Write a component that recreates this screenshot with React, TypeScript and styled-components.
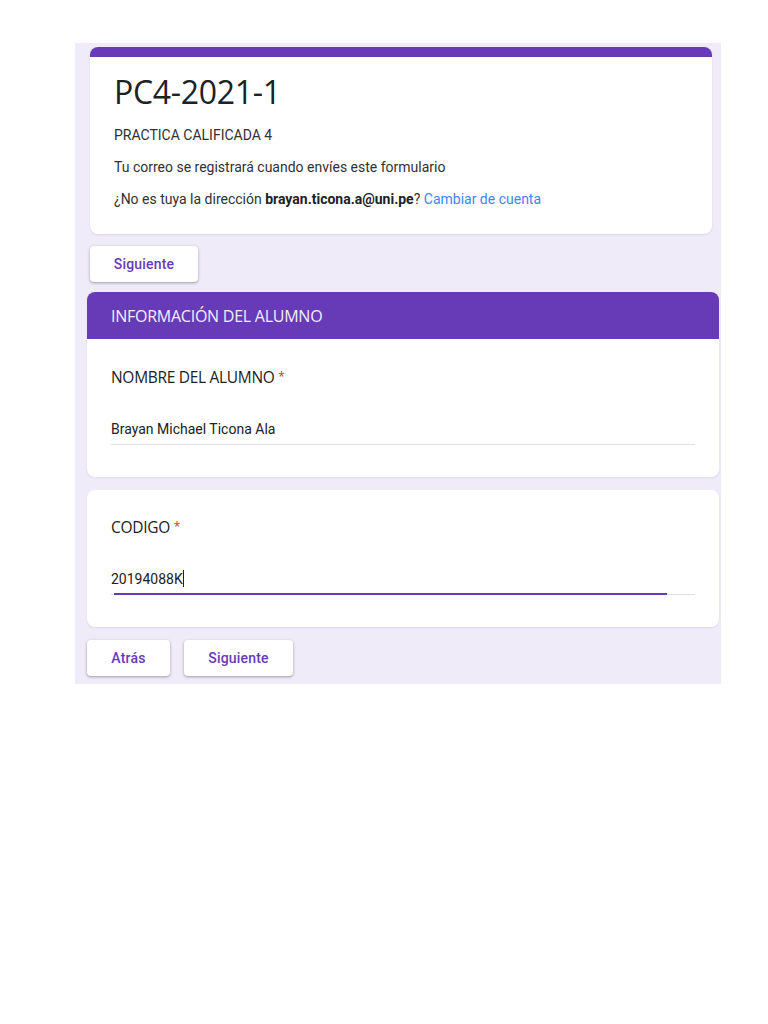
import styled, { createGlobalStyle } from 'styled-components';

const GlobalStyle = createGlobalStyle`
    body {
        margin: 0;
        background: #ffffff;
        font-family: Roboto, "Liberation Sans", sans-serif;
        color: #202124;
    }
`

const fields = [
    { label: 'NOMBRE DEL ALUMNO', value: 'Brayan Michael Ticona Ala', focused: false },
    { label: 'CODIGO', value: '20194088K', focused: true },
]

export default function App() {
    return (
        <>
            <GlobalStyle />
            <Page>
                <FormArea>
                    <HeaderCard>
                        <Title>PC4-2021-1</Title>
                        <Description>PRACTICA CALIFICADA 4</Description>
                        <Notice>Tu correo se registrará cuando envíes este formulario</Notice>
                        <Notice>
                            ¿No es tuya la dirección <b>brayan.ticona.a@uni.pe</b>? <Link>Cambiar de cuenta</Link>
                        </Notice>
                    </HeaderCard>
                    <ButtonRow $inset={3}>
                        <NavButton $width={108}>Siguiente</NavButton>
                    </ButtonRow>
                    <Section>
                        <SectionHeader>INFORMACIÓN DEL ALUMNO</SectionHeader>
                        <QuestionBody $top={true}>
                            <Question>{fields[0].label} <Required>*</Required></Question>
                            <Answer>
                                <AnswerText>{fields[0].value}</AnswerText>
                            </Answer>
                        </QuestionBody>
                    </Section>
                    <QuestionCard>
                        <QuestionBody>
                            <Question>{fields[1].label} <Required>*</Required></Question>
                            <Answer>
                                <AnswerText>{fields[1].value}<Caret /></AnswerText>
                                <FocusLine />
                            </Answer>
                        </QuestionBody>
                    </QuestionCard>
                    <ButtonRow $inset={0}>
                        <NavButton $width={83}>Atrás</NavButton>
                        <NavButton $width={109}>Siguiente</NavButton>
                    </ButtonRow>
                </FormArea>
            </Page>
        </>
    )
}

const Page = styled.div`
    padding: 43px 0 0 75px;
    min-height: 1024px;
    box-sizing: border-box;
`
const FormArea = styled.div`
    width: 646px;
    box-sizing: border-box;
    background: #f0ebf8;
    padding: 4px 2px 8px 12px;
    display: flex;
    flex-direction: column;
`
const HeaderCard = styled.div`
    margin: 0 7px 0 3px;
    background: #fff;
    border-radius: 8px;
    border-top: 10px solid #673ab7;
    box-shadow: 0 1px 2px rgba(60, 64, 67, 0.12);
    padding: 12px 24px 20px;
    height: 187px;
    box-sizing: border-box;
`
const Title = styled.h1`
    margin: 0 0 10px;
    font-family: "Open Sans", Roboto, sans-serif;
    font-weight: 400;
    font-size: 32px;
    line-height: 46px;
    color: #202124;
    letter-spacing: -0.3px;
`
const Description = styled.div`
    font-size: 14px;
    line-height: 20px;
    margin-bottom: 12px;
    color: #303134;
`
const Notice = styled.div`
    font-size: 14px;
    line-height: 20px;
    margin-bottom: 12px;
    color: #303134;
    b {
        font-weight: 700;
        color: #202124;
    }
`
const Link = styled.span`
    color: #4285f4;
`
const ButtonRow = styled.div<{ $inset: number }>`
    display: flex;
    gap: 14px;
    margin: ${p => (p.$inset ? '12px 0 10px ' + p.$inset + 'px' : '13px 0 0')};
`
const NavButton = styled.button<{ $width: number }>`
    width: ${p => p.$width}px;
    height: 36px;
    border: none;
    border-radius: 4px;
    background: #fff;
    box-shadow: 0 1px 2px rgba(60, 64, 67, 0.3), 0 1px 3px 1px rgba(60, 64, 67, 0.12);
    color: #673ab7;
    font-family: Roboto, sans-serif;
    font-weight: 500;
    font-size: 14px;
    letter-spacing: 0.2px;
    padding: 0;
`
const Section = styled.div`
    background: #fff;
    border-radius: 8px;
    overflow: hidden;
    box-shadow: 0 1px 2px rgba(60, 64, 67, 0.1);
`
const SectionHeader = styled.div`
    background: #673ab7;
    color: #f4f0fb;
    height: 47px;
    display: flex;
    align-items: center;
    padding: 0 24px;
    font-family: "Open Sans", Roboto, sans-serif;
    font-size: 16px;
    letter-spacing: -0.25px;
`
const QuestionCard = styled.div`
    margin-top: 13px;
    background: #fff;
    border-radius: 8px;
    box-shadow: 0 1px 2px rgba(60, 64, 67, 0.1);
`
const QuestionBody = styled.div<{ $top?: boolean }>`
    height: ${p => (p.$top ? 138 : 137)}px;
    box-sizing: border-box;
    padding: ${p => (p.$top ? '26px' : '25px')} 24px 0 24px;
`
const Question = styled.div`
    font-family: "Open Sans", Roboto, sans-serif;
    font-size: 15.5px;
    line-height: 24px;
    letter-spacing: -0.3px;
    color: #202124;
`
const Required = styled.span`
    color: #d93025;
    font-size: 12px;
    vertical-align: 2px;
`
const Answer = styled.div`
    position: relative;
    margin-top: 30px;
    width: 584px;
    border-bottom: 1px solid #e0e0e0;
    padding-bottom: 5px;
`
const AnswerText = styled.div`
    font-size: 14px;
    line-height: 20px;
    color: #202124;
`
const Caret = styled.span`
    display: inline-block;
    width: 1px;
    height: 17px;
    background: #202124;
    vertical-align: -3px;
`
const FocusLine = styled.div`
    position: absolute;
    left: 3px;
    bottom: -1px;
    width: 553px;
    height: 2px;
    background: #673ab7;
`
